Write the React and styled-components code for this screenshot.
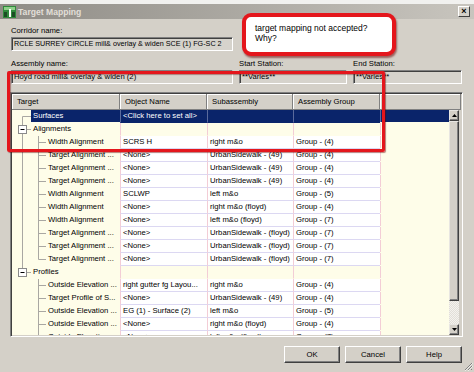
import React from 'react';
import styled, { createGlobalStyle } from 'styled-components';

const GlobalStyle = createGlobalStyle`
  html, body { margin: 0; padding: 0; background: #d4d0c8; }
  body { font-family: "Liberation Sans", Arial, sans-serif; }
`;

const CREAM = '#fefde9';
const NAVY = '#0a246a';

const Screen = styled.div`
  position: relative;
  width: 474px;
  height: 372px;
  overflow: hidden;
  background: #d4d0c8;
  font-family: "Liberation Sans", Arial, sans-serif;
  font-size: 7.7px;
  color: #000;
`;

const BackStrip = styled.div`
  height: 4px;
  background: #f1f1ef;
`;

const TitleBar = styled.div`
  height: 15px;
  display: flex;
  align-items: center;
  gap: 2px;
  padding: 0 4px 0 3px;
  background: linear-gradient(to right, #8f8c86, #c8c5be);
  color: #e2dfd8;
  font-weight: bold;
  font-size: 8.6px;
`;

const CloseButton = styled.div`
  margin-left: auto;
  width: 12px;
  height: 11px;
  box-sizing: border-box;
  display: flex;
  align-items: center;
  justify-content: center;
  background: #d4d0c8;
  border: 1px solid;
  border-color: #fff #404040 #404040 #fff;
  color: #000;
  font-size: 9px;
  font-weight: bold;
  line-height: 1;
`;

const Body = styled.div`
  padding: 7px 11px 0 10px;
  display: flex;
  flex-direction: column;
`;

const FieldRow = styled.div`
  display: grid;
  grid-template-columns: ${(p) => p.$cols};
  column-gap: 6px;
  margin-left: 1px;
  margin-top: ${(p) => p.$top || 0}px;
`;

const Label = styled.div`
  line-height: 9px;
  height: 9px;
  white-space: nowrap;
`;

const TextBox = styled.div`
  margin-top: 2px;
  height: 14px;
  box-sizing: border-box;
  border: 1px solid;
  border-color: #808080 #fff #fff #808080;
  box-shadow: inset 1px 1px 0 #404040;
  padding: 0 0 0 2px;
  font-size: ${(p) => p.$size || 7.7}px;
  line-height: 12px;
  white-space: nowrap;
  overflow: hidden;
  background: #d6d3cc;
`;

const Grid = styled.div`
  margin-top: 8px;
  height: 245px;
  box-sizing: border-box;
  border: 1px solid;
  border-color: #808080 #fff #fff #808080;
  box-shadow: inset 1px 1px 0 #404040;
  padding: 1px;
  display: flex;
  flex-direction: column;
  background: #d4d0c8;
`;

const HeaderRow = styled.div`
  height: 16px;
  display: flex;
  flex: none;
`;

const HeaderCell = styled.div`
  width: ${(p) => (p.$w ? `${p.$w}px` : 'auto')};
  flex: ${(p) => (p.$w ? 'none' : 1)};
  box-sizing: border-box;
  padding-left: 5px;
  line-height: 15px;
  border-right: 1px solid #808080;
  border-bottom: 1px solid #808080;
  box-shadow: inset 1px 1px 0 #fff;
  white-space: nowrap;
  overflow: hidden;
`;

const Viewport = styled.div`
  flex: 1;
  display: flex;
  overflow: hidden;
  padding-right: 2px;
`;

const List = styled.div`
  width: 437px;
  flex: none;
  background: ${CREAM};
  overflow: hidden;
`;

const Row = styled.div`
  height: 13px;
  display: flex;
`;

const TargetCell = styled.div`
  width: 108px;
  flex: none;
  display: flex;
  background: ${CREAM};
`;

const TargetText = styled.div`
  flex: 1;
  padding-left: ${(p) => p.$pad}px;
  line-height: 12px;
  height: 12px;
  white-space: nowrap;
  overflow: hidden;
  background: ${(p) => (p.$selected ? NAVY : 'transparent')};
  color: ${(p) => (p.$selected ? '#fff' : '#000')};
`;

const DataCell = styled.div`
  width: ${(p) => p.$w}px;
  flex: none;
  box-sizing: border-box;
  padding-left: 2px;
  line-height: 12px;
  white-space: nowrap;
  overflow: hidden;
  border-left: 1px solid ${(p) => (p.$selected ? '#5a6a9c' : '#f3cdd6')};
  border-bottom: 1px solid
    ${(p) => (p.$selected ? NAVY : p.$group ? CREAM : '#dcd8f2')};
  background: ${(p) => (p.$selected ? NAVY : p.$group ? CREAM : '#fff')};
  color: ${(p) => (p.$selected ? '#fff' : '#000')};
`;

const Filler = styled.div`
  flex: 1;
  height: 12px;
  border-left: 1px solid ${(p) => (p.$selected ? '#5a6a9c' : '#f3cdd6')};
  background: ${(p) => (p.$selected ? NAVY : CREAM)};
`;

const ScrollBar = styled.div`
  width: 10px;
  flex: none;
  display: flex;
  flex-direction: column;
  background: repeating-conic-gradient(#f4f2ee 0 25%, #e2dfd8 0 50%) 0 0 / 2px 2px;
`;

const Raised = styled.div`
  height: ${(p) => p.$h}px;
  flex: none;
  box-sizing: border-box;
  background: #d4d0c8;
  border: 1px solid;
  border-color: #e8e6e2 #404040 #404040 #e8e6e2;
  box-shadow: inset -1px -1px 0 #808080;
  display: flex;
  align-items: center;
  justify-content: center;
`;

const Track = styled.div`
  flex: 1;
`;

const ButtonRow = styled.div`
  margin-top: 9px;
  margin-right: 1px;
  display: flex;
  justify-content: flex-end;
  gap: 5px;
`;

const Button = styled.div`
  width: 56px;
  height: 17px;
  box-sizing: border-box;
  border: 1px solid;
  border-color: #fff #404040 #404040 #fff;
  box-shadow: inset -1px -1px 0 #808080;
  display: flex;
  align-items: center;
  justify-content: center;
  font-size: 7.7px;
`;

const Callout = styled.div`
  position: absolute;
  left: 242px;
  top: 13px;
  width: 154px;
  height: 43px;
  box-sizing: border-box;
  border: 4px solid #e4161c;
  border-radius: 9px;
  background: #fff;
  box-shadow: 1px 2px 2px rgba(110, 0, 0, 0.55);
  padding: 6px 0 0 9px;
  font-size: 8.5px;
  line-height: 10px;
`;

const Highlight = styled.div`
  position: absolute;
  left: 7px;
  top: 71px;
  width: 378px;
  height: 81px;
  box-sizing: border-box;
  border: 3.5px solid #e4161c;
  border-radius: 2px;
  box-shadow: 1px 1px 1px rgba(110, 0, 0, 0.5),
    inset 1px 1px 1px rgba(110, 0, 0, 0.4);
`;

const Grip = styled.svg`
  position: absolute;
  right: 1px;
  bottom: 1px;
`;

const AppIcon = () => (
  <svg width="13" height="12" viewBox="0 0 13 12">
    <rect x="0" y="0" width="13" height="12" fill="#2f8a3c" />
    <rect x="1" y="1" width="11" height="3" fill="#8fd08a" />
    <rect x="6" y="3" width="2" height="8" fill="#fff" />
    <rect x="1" y="6" width="3" height="5" fill="#1c4d25" />
    <rect x="9" y="6" width="3" height="5" fill="#1c4d25" />
  </svg>
);

const Arrow = ({ up }) => (
  <svg width="5" height="3" viewBox="0 0 5 3">
    <polygon points={up ? '0,3 5,3 2.5,0' : '0,0 5,0 2.5,3'} fill="#000" />
  </svg>
);

const LINE = '#a9a7a2';

// rootLine: full | top | bottom | none ; child: full | top | none
const Tree = ({ level, rootLine, child, box }) => {
  const w = level === 0 ? 19 : 35;
  return (
    <svg width={w} height="13" style={{ flex: 'none' }}>
      {rootLine === 'full' && <line x1="10.5" y1="0" x2="10.5" y2="13" stroke={LINE} />}
      {rootLine === 'top' && <line x1="10.5" y1="0" x2="10.5" y2="6.5" stroke={LINE} />}
      {rootLine === 'bottom' && <line x1="10.5" y1="6.5" x2="10.5" y2="13" stroke={LINE} />}
      {level === 0 && <line x1={box ? 14.5 : 10.5} y1="6.5" x2="19" y2="6.5" stroke={LINE} />}
      {box && (
        <g>
          <rect x="6.5" y="2.5" width="8" height="8" fill="#fff" stroke="#8a8a8a" />
          <line x1="8.5" y1="6.5" x2="12.5" y2="6.5" stroke="#000" />
        </g>
      )}
      {child === 'full' && <line x1="26.5" y1="0" x2="26.5" y2="13" stroke={LINE} />}
      {child === 'top' && <line x1="26.5" y1="0" x2="26.5" y2="6.5" stroke={LINE} />}
      {level === 1 && <line x1="26.5" y1="6.5" x2="34" y2="6.5" stroke={LINE} />}
    </svg>
  );
};

const TA = 'Target Alignment ...';
const OE = 'Outside Elevation ...';

const rows = [
  { level: 0, rootLine: 'bottom', target: 'Surfaces', obj: '<Click here to set all>', selected: true },
  { level: 0, rootLine: 'full', box: true, group: true, target: 'Alignments' },
  { level: 1, rootLine: 'full', child: 'full', target: 'Width Alignment', obj: 'SCRS H', sub: 'right m&o', grp: 'Group - (4)' },
  { level: 1, rootLine: 'full', child: 'full', target: TA, obj: '<None>', sub: 'UrbanSidewalk - (49)', grp: 'Group - (4)' },
  { level: 1, rootLine: 'full', child: 'full', target: TA, obj: '<None>', sub: 'UrbanSidewalk - (49)', grp: 'Group - (4)' },
  { level: 1, rootLine: 'full', child: 'full', target: TA, obj: '<None>', sub: 'UrbanSidewalk - (49)', grp: 'Group - (4)' },
  { level: 1, rootLine: 'full', child: 'full', target: 'Width Alignment', obj: 'SCLWP', sub: 'left m&o', grp: 'Group - (5)' },
  { level: 1, rootLine: 'full', child: 'full', target: 'Width Alignment', obj: '<None>', sub: 'right m&o (floyd)', grp: 'Group - (4)' },
  { level: 1, rootLine: 'full', child: 'full', target: 'Width Alignment', obj: '<None>', sub: 'left m&o (floyd)', grp: 'Group - (7)' },
  { level: 1, rootLine: 'full', child: 'full', target: TA, obj: '<None>', sub: 'UrbanSidewalk - (floyd)', grp: 'Group - (7)' },
  { level: 1, rootLine: 'full', child: 'full', target: TA, obj: '<None>', sub: 'UrbanSidewalk - (floyd)', grp: 'Group - (7)' },
  { level: 1, rootLine: 'full', child: 'top', target: TA, obj: '<None>', sub: 'UrbanSidewalk - (floyd)', grp: 'Group - (7)' },
  { level: 0, rootLine: 'top', box: true, group: true, target: 'Profiles' },
  { level: 1, child: 'full', target: OE, obj: 'right gutter fg Layou...', sub: 'right m&o', grp: 'Group - (4)' },
  { level: 1, child: 'full', target: 'Target Profile of S...', obj: '<None>', sub: 'UrbanSidewalk - (49)', grp: 'Group - (4)' },
  { level: 1, child: 'full', target: OE, obj: 'EG (1) - Surface (2)', sub: 'left m&o', grp: 'Group - (5)' },
  { level: 1, child: 'full', target: OE, obj: '<None>', sub: 'right m&o (floyd)', grp: 'Group - (4)' },
  { level: 1, child: 'full', target: OE, obj: '<None>', sub: 'left m&o (floyd)', grp: 'Group - (7)' },
];

const columns = [
  { title: 'Target', w: 108 },
  { title: 'Object Name', w: 87 },
  { title: 'Subassembly', w: 86 },
  { title: 'Assembly Group', w: 87 },
];

export default function App() {
  return (
    <Screen>
      <GlobalStyle />
      <BackStrip />
      <TitleBar>
        <AppIcon />
        <span>Target Mapping</span>
        <CloseButton>×</CloseButton>
      </TitleBar>
      <Body>
        <FieldRow $cols="222px">
          <div>
            <Label>Corridor name:</Label>
            <TextBox $size={7.2}>RCLE SURREY CIRCLE mill&amp; overlay &amp; widen SCE (1) FG-SC 2</TextBox>
          </div>
        </FieldRow>
        <FieldRow $cols="222px 108px 109px" $top={8}>
          <div>
            <Label>Assembly name:</Label>
            <TextBox>Hoyd road mill&amp; overlay &amp; widen (2)</TextBox>
          </div>
          <div>
            <Label>Start Station:</Label>
            <TextBox>**Varies**</TextBox>
          </div>
          <div>
            <Label>End Station:</Label>
            <TextBox>**Varies**</TextBox>
          </div>
        </FieldRow>

        <Grid>
          <HeaderRow>
            {columns.map((c) => (
              <HeaderCell key={c.title} $w={c.w}>{c.title}</HeaderCell>
            ))}
            <HeaderCell />
          </HeaderRow>
          <Viewport>
            <List>
              {rows.map((r, i) => (
                <Row key={i}>
                  <TargetCell>
                    <Tree level={r.level} rootLine={r.rootLine} child={r.child} box={r.box} />
                    <TargetText $pad={r.level === 0 ? 2 : 1} $selected={r.selected}>
                      {r.target}
                    </TargetText>
                  </TargetCell>
                  <DataCell $w={87} $group={r.group} $selected={r.selected}>{r.obj}</DataCell>
                  <DataCell $w={86} $group={r.group} $selected={r.selected}>{r.sub}</DataCell>
                  <DataCell $w={87} $group={r.group} $selected={r.selected}>{r.grp}</DataCell>
                  <Filler $selected={r.selected} />
                </Row>
              ))}
            </List>
            <ScrollBar>
              <Raised $h={11}><Arrow up /></Raised>
              <Raised $h={180} />
              <Track />
              <Raised $h={11}><Arrow /></Raised>
            </ScrollBar>
          </Viewport>
        </Grid>

        <ButtonRow>
          <Button>OK</Button>
          <Button>Cancel</Button>
          <Button>Help</Button>
        </ButtonRow>
      </Body>

      <Highlight />
      <Callout>
        target mapping not accepted?
        <br />
        Why?
      </Callout>
      <Grip width="9" height="9" viewBox="0 0 9 9">
        <path d="M8 1 L1 8 M8 4 L4 8 M8 7 L7 8" stroke="#808080" strokeWidth="1" />
        <path d="M9 1 L1 9 M9 4 L4 9" stroke="#fff" strokeWidth="0.6" />
      </Grip>
    </Screen>
  );
}
